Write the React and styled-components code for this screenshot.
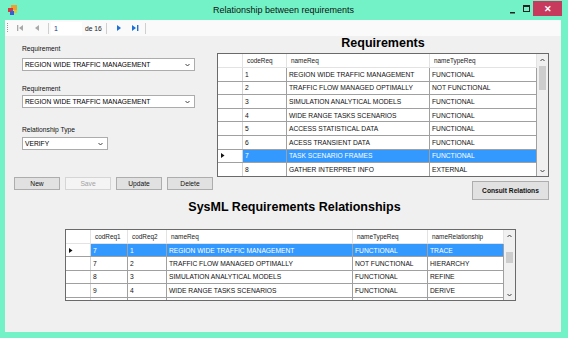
import React from "react";
import styled, { createGlobalStyle } from "styled-components";

const GlobalStyle = createGlobalStyle`
  html, body {
    margin: 0;
    padding: 0;
    background: #72f2c6;
  }
  body {
    font-family: "Liberation Sans", Arial, sans-serif;
  }
`;

const Window = styled.div`
  width: 568px;
  height: 338px;
  box-sizing: border-box;
  padding: 0 7px 6px 5px;
  display: flex;
  flex-direction: column;
  background: #72f2c6;
`;

const TitleBar = styled.div`
  height: 20px;
  display: flex;
  align-items: center;
  margin-right: -1px;
  .title {
    flex: 1;
    text-align: center;
    font-size: 9px;
    color: #111;
    margin-left: 45px;
  }
`;

const AppIcon = styled.svg`
  width: 9px;
  height: 10px;
  margin-left: 3px;
`;

const Caption = styled.div`
  display: flex;
  align-items: flex-start;
  align-self: flex-start;
  margin-top: 1px;
`;

const CapBtn = styled.div`
  width: ${p => p.w}px;
  height: 15px;
  display: flex;
  align-items: center;
  justify-content: center;
  background: ${p => p.bg || "transparent"};
  color: #fff;
  font-size: 9px;
  font-weight: bold;
`;

const Client = styled.div`
  flex: 1;
  background: #f0f0f0;
  display: flex;
  flex-direction: column;
`;

const Toolbar = styled.div`
  height: 16px;
  background: #fafafa;
  display: flex;
  align-items: center;
  padding-left: 2px;
`;

const Grip = styled.div`
  width: 1px;
  height: 10px;
  margin-right: 4px;
  background-image: linear-gradient(#9a9a9a 50%, transparent 50%);
  background-size: 1px 2px;
`;

const ToolIcon = styled.svg`
  width: ${p => p.w || 12}px;
  height: 10px;
  margin: 0 ${p => p.mx || 2}px;
`;

const ToolSep = styled.div`
  width: 1px;
  height: 11px;
  background: #cfcfcf;
  margin: 0 2px;
`;

const PageBox = styled.div`
  width: 31px;
  height: 13px;
  background: #fff;
  font-size: 7px;
  color: #12308a;
  display: flex;
  align-items: center;
  padding-left: 3px;
  box-sizing: border-box;
`;

const PageText = styled.span`
  font-size: 6.7px;
  color: #222;
  margin: 0 2px 0 3px;
`;

const TopRow = styled.div`
  display: flex;
`;

const LeftPanel = styled.div`
  width: 203px;
  padding-left: 9px;
  display: flex;
  flex-direction: column;
`;

const Label = styled.div`
  font-size: 6.7px;
  line-height: 8px;
  color: #111;
  margin-top: ${p => p.mt}px;
  margin-left: 8px;
`;

const Combo = styled.div`
  width: ${p => p.w}px;
  height: 13px;
  box-sizing: border-box;
  margin-top: ${p => p.mt}px;
  margin-left: 8px;
  background: #fff;
  border: 1px solid #acacac;
  display: flex;
  align-items: center;
  justify-content: space-between;
  padding: 0 4px 0 2px;
  font-size: 6.7px;
  color: #000;
`;

const Chevron = styled.svg`
  width: 5px;
  height: 4px;
`;

const ButtonRow = styled.div`
  display: flex;
  gap: 5px;
  margin-top: 27px;
`;

const Button = styled.div`
  width: ${p => p.w || 46}px;
  height: ${p => p.h || 13}px;
  box-sizing: border-box;
  background: ${p => (p.disabled ? "#f4f4f4" : "#e1e1e1")};
  border: 1px solid ${p => (p.disabled ? "#d5d5d5" : "#adadad")};
  color: ${p => (p.disabled ? "#a3a3a3" : "#111")};
  font-size: 6.7px;
  font-weight: ${p => (p.bold ? "bold" : "normal")};
  display: flex;
  align-items: center;
  justify-content: center;
`;

const RightPanel = styled.div`
  width: 332px;
  display: flex;
  flex-direction: column;
`;

const SectionTitle = styled.div`
  font-size: 12.5px;
  line-height: 15px;
  font-weight: bold;
  color: #000;
  text-align: center;
  padding-left: ${p => p.pl || 0}px;
`;

const ConsultRow = styled.div`
  display: flex;
  justify-content: flex-end;
  margin-top: 4px;
`;

const Bottom = styled.div`
  margin-left: 60px;
  width: 451px;
  display: flex;
  flex-direction: column;
`;

const GridFrame = styled.div`
  display: flex;
  border: 1px solid #6a6a6a;
  background: #fff;
  height: ${p => p.h}px;
  box-sizing: border-box;
  margin-top: ${p => p.mt}px;
  overflow: hidden;
`;

const GridBody = styled.div`
  flex: 1;
  overflow: hidden;
`;

const Row = styled.div`
  display: grid;
  grid-template-columns: ${p => p.cols};
  height: ${p => p.h}px;
  box-sizing: border-box;
  border-bottom: 1px solid ${p => (p.header ? "#e3e3e3" : "#a0a0a0")};
`;

const Cell = styled.div`
  display: flex;
  align-items: center;
  overflow: hidden;
  white-space: nowrap;
  box-sizing: border-box;
  border-right: 1px solid ${p => (p.header ? "#e3e3e3" : "#a0a0a0")};
  padding-left: ${p => (p.header ? 4 : 2)}px;
  font-size: ${p => (p.header ? 6.4 : 6.7)}px;
  color: ${p => (p.sel ? "#fff" : p.header ? "#222" : "#111")};
  background: ${p => (p.sel ? "#3399ff" : "#fff")};
`;

const RowHead = styled.div`
  display: flex;
  align-items: center;
  padding-left: 3px;
  box-sizing: border-box;
  border-right: 1px solid ${p => (p.header ? "#e3e3e3" : "#d4d4d4")};
  background: #fff;
`;

const ScrollBar = styled.div`
  width: 11px;
  background: #f0f0f0;
  display: flex;
  flex-direction: column;
  align-items: center;
  justify-content: space-between;
  padding: 4px 0 3px;
  box-sizing: border-box;
  position: relative;
`;

const Thumb = styled.div`
  position: absolute;
  left: 2px;
  width: 7px;
  top: ${p => p.top}px;
  height: ${p => p.h}px;
  background: #cdcdcd;
`;

const Arrow = ({ down }) => (
  <Chevron viewBox="0 0 5 4">
    <polyline
      points={down ? "0.5,1 2.5,3 4.5,1" : "0.5,3 2.5,1 4.5,3"}
      fill="none"
      stroke="#404040"
      strokeWidth="1"
    />
  </Chevron>
);

const Marker = () => (
  <svg width="4" height="5" viewBox="0 0 4 5">
    <polygon points="0,0 3.5,2.5 0,5" fill="#111" />
  </svg>
);

const requirements = [
  ["1", "REGION WIDE TRAFFIC MANAGEMENT", "FUNCTIONAL"],
  ["2", "TRAFFIC FLOW MANAGED OPTIMALLY", "NOT FUNCTIONAL"],
  ["3", "SIMULATION ANALYTICAL MODELS", "FUNCTIONAL"],
  ["4", "WIDE RANGE TASKS SCENARIOS", "FUNCTIONAL"],
  ["5", "ACCESS STATISTICAL DATA", "FUNCTIONAL"],
  ["6", "ACESS TRANSIENT DATA", "FUNCTIONAL"],
  ["7", "TASK SCENARIO FRAMES", "FUNCTIONAL"],
  ["8", "GATHER INTERPRET INFO", "EXTERNAL"],
];

const relationships = [
  ["7", "1", "REGION WIDE TRAFFIC MANAGEMENT", "FUNCTIONAL", "TRACE"],
  ["7", "2", "TRAFFIC FLOW MANAGED OPTIMALLY", "NOT FUNCTIONAL", "HIERARCHY"],
  ["8", "3", "SIMULATION ANALYTICAL MODELS", "FUNCTIONAL", "REFINE"],
  ["9", "4", "WIDE RANGE TASKS SCENARIOS", "FUNCTIONAL", "DERIVE"],
  ["", "", "", "", ""],
];

const DataGrid = ({ cols, headers, rows, selected, height, rowH, mt, thumb }) => (
  <GridFrame h={height} mt={mt}>
    <GridBody>
      <Row header cols={cols} h={14}>
        <RowHead header />
        {headers.map(h => (
          <Cell header key={h}>{h}</Cell>
        ))}
      </Row>
      {rows.map((r, i) => (
        <Row cols={cols} h={rowH} key={i}>
          <RowHead>{i === selected ? <Marker /> : null}</RowHead>
          {r.map((c, j) => (
            <Cell key={j} sel={i === selected}>{c}</Cell>
          ))}
        </Row>
      ))}
    </GridBody>
    <ScrollBar>
      <Arrow />
      <Thumb top={thumb[0]} h={thumb[1]} />
      <Arrow down />
    </ScrollBar>
  </GridFrame>
);

export default function App() {
  return (
    <>
      <GlobalStyle />
      <Window>
        <TitleBar>
          <AppIcon viewBox="0 0 9 10">
            <rect x="3" y="0" width="6" height="5" fill="#f0a030" />
            <rect x="0" y="3" width="5" height="4" fill="#d63a3a" />
            <rect x="2" y="6" width="4" height="4" fill="#3a5ad6" />
            <rect x="6" y="5" width="3" height="3" fill="#e6c23a" />
          </AppIcon>
          <div className="title">Relationship between requirements</div>
          <Caption>
            <CapBtn w={14}>
              <svg width="5" height="2" viewBox="0 0 5 2" style={{ marginTop: 8 }}>
                <rect width="5" height="1.5" fill="#222" />
              </svg>
            </CapBtn>
            <CapBtn w={14}>
              <svg width="7" height="7" viewBox="0 0 7 7">
                <rect x="0.5" y="0.5" width="6" height="6" fill="none" stroke="#222" />
                <rect x="0" y="0" width="7" height="2" fill="#222" />
              </svg>
            </CapBtn>
            <CapBtn w={29} bg="#c8395e">✕</CapBtn>
          </Caption>
        </TitleBar>
        <Client>
          <Toolbar>
            <Grip />
            <ToolIcon viewBox="0 0 12 10">
              <rect x="3" y="2" width="1.3" height="6" fill="#a9a9a9" />
              <polygon points="9,2 5,5 9,8" fill="#a9a9a9" />
            </ToolIcon>
            <ToolIcon viewBox="0 0 12 10" mx={3}>
              <polygon points="8,2 4,5 8,8" fill="#a9a9a9" />
            </ToolIcon>
            <ToolSep />
            <PageBox>1</PageBox>
            <PageText>de 16</PageText>
            <ToolSep />
            <ToolIcon viewBox="0 0 12 10" mx={3}>
              <polygon points="5,2 9,5 5,8" fill="#1f6fd8" />
            </ToolIcon>
            <ToolIcon viewBox="0 0 12 10">
              <polygon points="3,2 7,5 3,8" fill="#1f6fd8" />
              <rect x="8" y="2" width="1.4" height="6" fill="#1f6fd8" />
            </ToolIcon>
            <ToolSep />
          </Toolbar>
          <TopRow>
            <LeftPanel>
              <Label mt={9}>Requirement</Label>
              <Combo w={173} mt={5}>
                REGION WIDE TRAFFIC MANAGEMENT
                <Arrow down />
              </Combo>
              <Label mt={14}>Requirement</Label>
              <Combo w={173} mt={2}>
                REGION WIDE TRAFFIC MANAGEMENT
                <Arrow down />
              </Combo>
              <Label mt={18}>Relationship Type</Label>
              <Combo w={86} mt={3}>
                VERIFY
                <Arrow down />
              </Combo>
              <ButtonRow>
                <Button>New</Button>
                <Button disabled>Save</Button>
                <Button>Update</Button>
                <Button>Delete</Button>
              </ButtonRow>
            </LeftPanel>
            <RightPanel>
              <SectionTitle>Requirements</SectionTitle>
              <DataGrid
                cols="25px 44px 143px 107px"
                headers={["codeReq", "nameReq", "nameTypeReq"]}
                rows={requirements}
                selected={6}
                height={124}
                rowH={13.6}
                mt={2}
                thumb={[12, 24]}
              />
              <ConsultRow>
                <Button w={77} h={19} bold>Consult Relations</Button>
              </ConsultRow>
            </RightPanel>
          </TopRow>
          <Bottom>
            <SectionTitle pl={8}>SysML Requirements Relationships</SectionTitle>
            <DataGrid
              cols="25px 37px 39px 186px 75px 76px"
              headers={["codReq1", "codReq2", "nameReq", "nameTypeReq", "nameRelationship"]}
              rows={relationships}
              selected={0}
              height={72}
              rowH={13.4}
              mt={14}
              thumb={[22, 11]}
            />
          </Bottom>
        </Client>
      </Window>
    </>
  );
}
